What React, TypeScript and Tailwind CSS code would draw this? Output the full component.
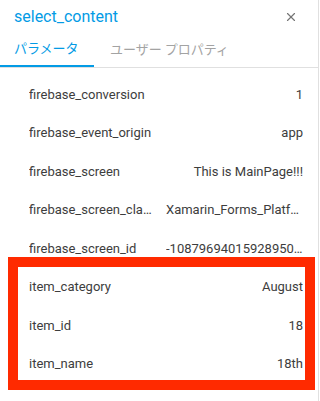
import { X } from 'lucide-react'

const rows: [string, string][] = [
    ['firebase_conversion', '1'],
    ['firebase_event_origin', 'app'],
    ['firebase_screen', 'This is MainPage!!!'],
    ['firebase_screen_class', 'Xamarin_Forms_Platform_Android_PageRenderer'],
    ['firebase_screen_id', '-1087969401592895034'],
    ['item_category', 'August'],
    ['item_id', '18'],
    ['item_name', '18th'],
]

export default function App() {
    return (
        <div className="relative w-[319px] h-[401px] bg-white border-r border-[#e0e0e0] font-['Roboto','Noto_Sans_CJK_JP',sans-serif]">
            {/* Header */}
            <div className="flex items-center justify-between h-[34px] pl-[14px] pr-[20px]">
                <span className="text-[16px] text-[#039be5] leading-none">select_content</span>
                <X className="w-[14px] h-[14px] text-[#757575]" strokeWidth={2} />
            </div>

            {/* Tabs */}
            <div className="flex h-[34px] border-b border-[#e0e0e0] text-[13px] font-['Noto_Sans_CJK_JP',sans-serif]">
                <div className="w-[94px] h-[33px] flex items-center pl-[14px] pb-[3px] border-b-2 border-[#039be5] text-[#039be5]">
                    パラメータ
                </div>
                <div className="h-[33px] flex items-center pl-[16px] pb-[3px] text-[#a3a3a3]">
                    ユーザー プロパティ
                </div>
            </div>

            {/* Params */}
            <div className="pt-[7px] text-[13px] text-[#3d3d3d]">
                {rows.map(([k, v]) => (
                    <div key={k} className="grid grid-cols-[124px_137px] gap-x-[13px] items-center h-[38.5px] pl-[29px]">
                        <span className="truncate">{k}</span>
                        <span className="truncate text-right">{v}</span>
                    </div>
                ))}
            </div>

            {/* highlight annotation */}
            <div className="absolute left-[8px] top-[257px] w-[307px] h-[133px] border-[10px] border-[#ff2a00] pointer-events-none" />
        </div>
    )
}
